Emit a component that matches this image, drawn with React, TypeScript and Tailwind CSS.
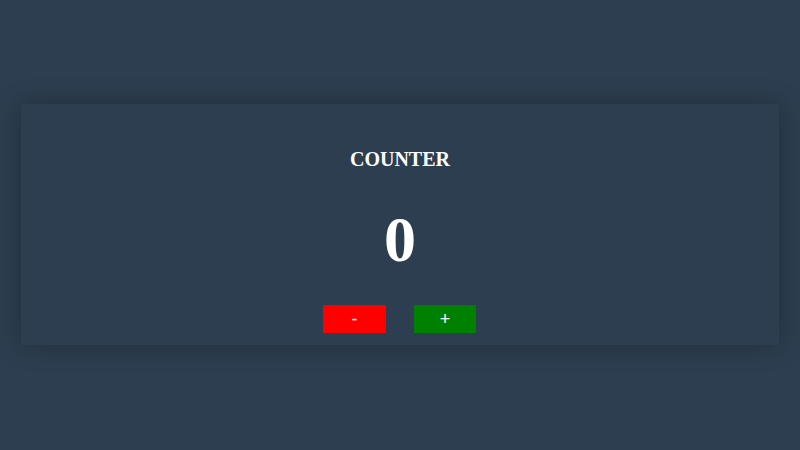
import React, { useState } from 'react';

export default function App() {
  const [count, setCount] = useState(0);

  return (
    <div className="min-h-screen h-[450px] bg-[#2c3e50] flex items-center justify-center pb-[1px]">
      {/* Counter card */}
      <div className="w-[758px] bg-[#2c3e50] shadow-[0_0_24px_rgba(0,0,0,0.25)] pt-[41px] pb-[12px] flex flex-col items-center text-white">
        <h1 className="font-['Liberation_Serif',serif] font-bold text-xl leading-7">COUNTER</h1>
        <div className="mt-[35px] font-['Liberation_Serif',serif] font-bold text-[64px] leading-none">{count}</div>
        <div className="mt-[33px] flex gap-[28px] pr-[1px]">
          <button
            onClick={() => setCount(c => c - 1)}
            className="w-[63px] h-[28px] bg-[#ff0000] text-white font-['Liberation_Sans',sans-serif] text-lg leading-none"
          >
            -
          </button>
          <button
            onClick={() => setCount(c => c + 1)}
            className="w-[62px] h-[28px] bg-[#008000] text-white font-['Liberation_Sans',sans-serif] text-lg leading-none"
          >
            +
          </button>
        </div>
      </div>
    </div>
  );
}
